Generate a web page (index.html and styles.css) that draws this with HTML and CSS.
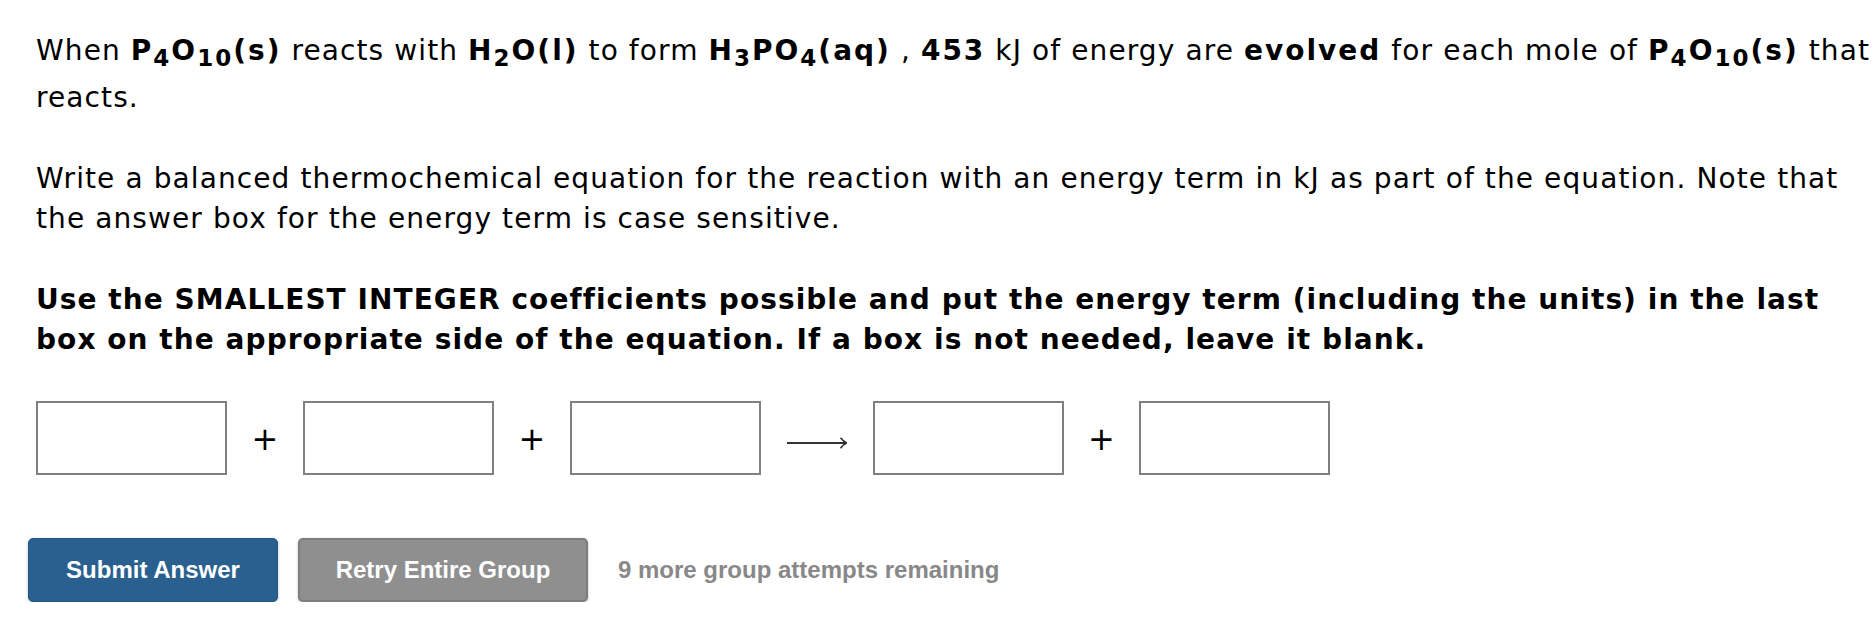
FILE: index.html
```html
<!DOCTYPE html>
<html>
<head>
<meta charset="utf-8">
<link rel="stylesheet" href="styles.css">
</head>
<body>
<div class="question">
  <p class="para">When <b>P<sub>4</sub>O<sub>10</sub>(s)</b> reacts with <b>H<sub>2</sub>O(l)</b> to form <b>H<sub>3</sub>PO<sub>4</sub>(aq)</b> , <b>453</b> kJ of energy are <b>evolved</b> for each mole of <b>P<sub>4</sub>O<sub>10</sub>(s)</b> that<br>reacts.</p>
  <p class="para">Write a balanced thermochemical equation for the reaction with an energy term in kJ as part of the equation. Note that<br>the answer box for the energy term is case sensitive.</p>
  <p class="para strong">Use the SMALLEST INTEGER coefficients possible and put the energy term (including the units) in the last<br>box on the appropriate side of the equation. If a box is not needed, leave it blank.</p>

  <div class="equation">
    <input class="box" type="text">
    <span class="op">+</span>
    <input class="box" type="text">
    <span class="op">+</span>
    <input class="box" type="text">
    <span class="op arrow">
      <svg width="60" height="14" viewBox="0 0 60 14"><line x1="0" y1="7" x2="59" y2="7" stroke="#333" stroke-width="2"/><path d="M53.5 1.8 C55.5 4.5 57.5 6.2 60 7 C57.5 7.8 55.5 9.5 53.5 12.2" fill="none" stroke="#333" stroke-width="1.6"/></svg>
    </span>
    <input class="box" type="text">
    <span class="op last">+</span>
    <input class="box" type="text">
  </div>

  <div class="actions">
    <button class="btn btn-primary" type="button">Submit Answer</button>
    <button class="btn btn-secondary" type="button">Retry Entire Group</button>
    <span class="attempts">9 more group attempts remaining</span>
  </div>
</div>
</body>
</html>
```

FILE: styles.css
```css
html, body {
  margin: 0;
  padding: 0;
  background: #fff;
}

body {
  font-family: "DejaVu Sans", Verdana, sans-serif;
  font-size: 28px;
  color: #000;
}

.question {
  padding: 31px 0 0 36px;
}

.para {
  margin: 0 0 41px 0;
  line-height: 40px;
  white-space: nowrap;
  letter-spacing: 1.1px;
}

.para b {
  font-weight: bold;
  letter-spacing: 2px;
}

.strong {
  font-weight: bold;
  letter-spacing: 1.05px;
}

sub {
  font-size: 23px;
  line-height: 40px;
  vertical-align: -6px;
}

.equation {
  display: flex;
  align-items: center;
  margin-top: 40px;
}

.box {
  box-sizing: border-box;
  width: 191px;
  height: 74px;
  border: 2px solid #808080;
  border-radius: 0;
  margin: 0;
  padding: 0 8px;
  font-size: 24px;
  background: #fff;
  outline: none;
}

.op {
  width: 76px;
  display: flex;
  justify-content: center;
  align-items: center;
  font-family: "DejaVu Sans", sans-serif;
  font-size: 32px;
  line-height: 1;
  color: #000;
  padding-top: 2px;
}

.op.arrow {
  width: 112px;
  padding-top: 10px;
}

.op.last {
  width: 75px;
}

.actions {
  display: flex;
  align-items: center;
  margin-top: 63px;
  margin-left: -8px;
}

.btn {
  box-sizing: border-box;
  height: 64px;
  border-radius: 5px;
  font-family: "Liberation Sans", Arial, Helvetica, sans-serif;
  font-weight: bold;
  font-size: 24px;
  color: #fff;
  padding: 0;
  cursor: pointer;
  box-shadow: 0 1px 3px rgba(0, 0, 0, 0.25);
}

.btn-primary {
  width: 250px;
  background: #29608f;
  border: 1px solid #245684;
}

.btn-secondary {
  width: 290px;
  margin-left: 20px;
  background: #8f8f8f;
  border: 2px solid #7d7d7d;
}

.attempts {
  margin-left: 30px;
  font-family: "Liberation Sans", Arial, Helvetica, sans-serif;
  font-weight: bold;
  font-size: 24px;
  color: #888;
}
```
